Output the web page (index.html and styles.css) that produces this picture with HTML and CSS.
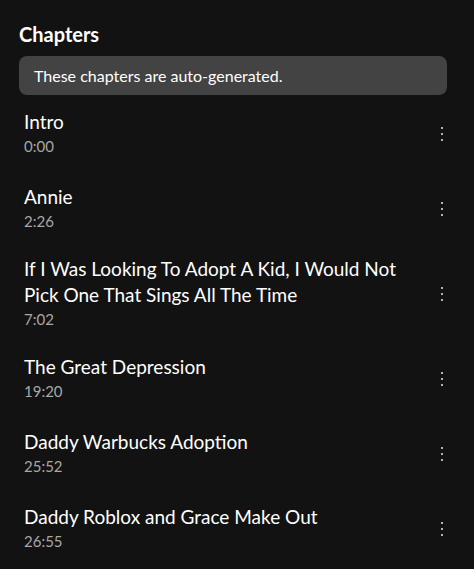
FILE: index.html
```html
<!DOCTYPE html>
<html lang="en">
<head>
    <meta charset="UTF-8">
    <meta name="viewport" content="width=device-width, initial-scale=1.0">
    <title>Chapters</title>
    <link rel="stylesheet" href="styles.css">
</head>
<body>

<div class="chapters">
    <h2>Chapters</h2>
    <div class="notice">These chapters are auto-generated.</div>

    <ul class="chapter-list">
        <li class="chapter">
            <div class="chapter-info">
                <div class="chapter-title">Intro</div>
                <div class="chapter-time">0:00</div>
            </div>
            <button class="more" aria-label="More options"><span></span><span></span><span></span></button>
        </li>
        <li class="chapter">
            <div class="chapter-info">
                <div class="chapter-title">Annie</div>
                <div class="chapter-time">2:26</div>
            </div>
            <button class="more" aria-label="More options"><span></span><span></span><span></span></button>
        </li>
        <li class="chapter">
            <div class="chapter-info">
                <div class="chapter-title">If I Was Looking To Adopt A Kid, I Would Not Pick One That Sings All The Time</div>
                <div class="chapter-time">7:02</div>
            </div>
            <button class="more" aria-label="More options"><span></span><span></span><span></span></button>
        </li>
        <li class="chapter">
            <div class="chapter-info">
                <div class="chapter-title">The Great Depression</div>
                <div class="chapter-time">19:20</div>
            </div>
            <button class="more" aria-label="More options"><span></span><span></span><span></span></button>
        </li>
        <li class="chapter">
            <div class="chapter-info">
                <div class="chapter-title">Daddy Warbucks Adoption</div>
                <div class="chapter-time">25:52</div>
            </div>
            <button class="more" aria-label="More options"><span></span><span></span><span></span></button>
        </li>
        <li class="chapter">
            <div class="chapter-info">
                <div class="chapter-title">Daddy Roblox and Grace Make Out</div>
                <div class="chapter-time">26:55</div>
            </div>
            <button class="more" aria-label="More options"><span></span><span></span><span></span></button>
        </li>
    </ul>
</div>

</body>
</html>
```

FILE: styles.css
```css
body {
    margin: 0;
    background-color: #121212;
    color: #fff;
    font-family: Lato, "Open Sans", sans-serif;
}
.chapters {
    padding: 22px 27px 0 19px;
}
h2 {
    margin: 0 0 10px;
    font-size: 20px;
    font-weight: 700;
    line-height: 24px;
}
.notice {
    padding: 10px 15px;
    background-color: #434343;
    border-radius: 8px;
    font-size: 16px;
    line-height: 19px;
}
.chapter-list {
    list-style: none;
    margin: 1px 0 0;
    padding: 0;
}
/* short rows keep a fixed height, long titles grow the row */
.chapter {
    display: flex;
    align-items: center;
    justify-content: space-between;
    box-sizing: border-box;
    min-height: 75px;
    padding: 10px 0 10px 5px;
}
.chapter-info {
    padding-right: 30px;
}
.chapter-title {
    font-size: 19px;
    line-height: 25.5px;
}
.chapter-time {
    font-size: 15px;
    line-height: 24px;
    color: #a7a7a7;
}
.more {
    display: flex;
    flex-direction: column;
    gap: 4px;
    padding: 0;
    margin-right: 4px;
    border: none;
    background: none;
}
.more span {
    width: 2px;
    height: 2px;
    background-color: #b3b3b3;
}
```
